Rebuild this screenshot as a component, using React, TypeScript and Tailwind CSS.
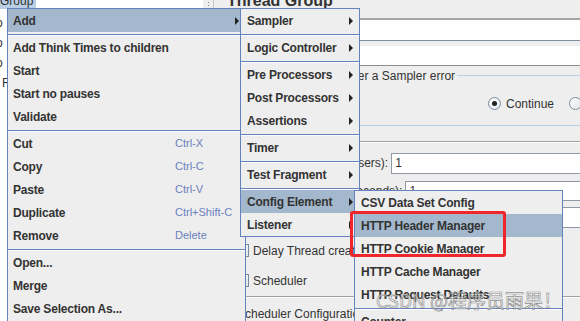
import React from 'react';

type Entry = { label: string; sub?: boolean; key?: string; active?: boolean } | 'sep';

const mainItems: Entry[] = [
  { label: 'Add', sub: true, active: true },
  'sep',
  { label: 'Add Think Times to children' },
  { label: 'Start' },
  { label: 'Start no pauses' },
  { label: 'Validate' },
  'sep',
  { label: 'Cut', key: 'Ctrl-X' },
  { label: 'Copy', key: 'Ctrl-C' },
  { label: 'Paste', key: 'Ctrl-V' },
  { label: 'Duplicate', key: 'Ctrl+Shift-C' },
  { label: 'Remove', key: 'Delete' },
  'sep',
  { label: 'Open...' },
  { label: 'Merge' },
  { label: 'Save Selection As...' },
  { label: 'Save Node As Image' },
];

const addItems: Entry[] = [
  { label: 'Sampler', sub: true },
  'sep',
  { label: 'Logic Controller', sub: true },
  'sep',
  { label: 'Pre Processors', sub: true },
  { label: 'Post Processors', sub: true },
  { label: 'Assertions', sub: true },
  'sep',
  { label: 'Timer', sub: true },
  'sep',
  { label: 'Test Fragment', sub: true },
  'sep',
  { label: 'Config Element', sub: true, active: true },
  { label: 'Listener', sub: true },
];

const configItems: Entry[] = [
  { label: 'CSV Data Set Config' },
  { label: 'HTTP Header Manager', active: true },
  { label: 'HTTP Cookie Manager' },
  { label: 'HTTP Cache Manager' },
  { label: 'HTTP Request Defaults' },
  'sep',
  { label: 'Counter' },
];

function Arrow() {
  return (
    <svg width="4" height="8" viewBox="0 0 4 8" className="shrink-0">
      <path d="M0 0L4 4L0 8Z" fill="#222" />
    </svg>
  );
}

function Sep() {
  return (
    <div className="h-[4px] pt-[2px]">
      <div className="h-px bg-[#6382bf]" />
      <div className="h-px bg-white" />
    </div>
  );
}

function Menu({ items, className, pl, withKeys }: { items: Entry[]; className: string; pl: string; withKeys?: boolean }) {
  return (
    <div className={`absolute flex flex-col border border-[#6382bf] bg-[#eeeeee] ${className}`}>
      {items.map((it, i) =>
        it === 'sep' ? (
          <Sep key={i} />
        ) : (
          <div
            key={i}
            className={`flex h-[23px] shrink-0 items-center pr-[6px] ${pl} ${it.active ? 'bg-[#a3b8cc]' : ''}`}
          >
            <span className={`${withKeys ? 'w-[162px]' : 'flex-1'} whitespace-nowrap text-[12px] font-bold tracking-[-0.2px] text-[#333]`}>
              {it.label}
            </span>
            {withKeys && (
              <span className="flex-1 whitespace-nowrap text-[11px] text-[#6a80bd]">{it.key}</span>
            )}
            {it.sub && <Arrow />}
          </div>
        )
      )}
    </div>
  );
}

function Radio({ on }: { on?: boolean }) {
  return (
    <span className="flex h-[13px] w-[13px] shrink-0 items-center justify-center rounded-full border border-[#7a8a99] bg-gradient-to-br from-white to-[#dfe6ee]">
      {on && <span className="h-[5px] w-[5px] rounded-full bg-[#222]" />}
    </span>
  );
}

function Check() {
  return <span className="h-[13px] w-[13px] shrink-0 border border-[#7a8a99] bg-gradient-to-br from-white to-[#dfe6ee]" />;
}

export default function App() {
  return (
    <div className="relative flex h-[321px] w-[580px] overflow-hidden bg-[#eeeeee] font-['Liberation_Sans',Arial,sans-serif] text-[12px] text-[#333]">
      {/* tree */}
      <div className="flex w-[203px] shrink-0 flex-col bg-white">
        <div className="mt-[-11px] flex h-[20px] items-end">
          <span className="bg-[#b8cfe5] pr-[3px] leading-[16px]">Group</span>
        </div>
        <div className="ml-[-4px] flex flex-col leading-[20px]">
          <span className="mt-[4px]">o</span>
          <span>o</span>
          <span>o</span>
          <span className="ml-[6px]">R</span>
        </div>
      </div>
      {/* divider */}
      <div className="flex w-[11px] shrink-0 justify-center border-r border-[#c8c8c8] bg-[#eeeeee] pt-[2px]">
        <div className="flex flex-col gap-[2px]">
          <span className="h-px w-px bg-[#888]" />
          <span className="h-px w-px bg-[#888]" />
          <span className="h-px w-px bg-[#888]" />
        </div>
      </div>
      {/* thread group panel */}
      <div className="flex min-w-0 flex-1 flex-col">
        <div className="ml-[13px] mt-[-7px] h-[16px] shrink-0 whitespace-nowrap text-[16px] font-bold leading-[16px]">Thread Group</div>
        <div className="mt-[9px] flex h-[23px] items-center pl-[14px]">
          <span className="w-[40px]">Name:</span>
          <div className="mr-[-20px] h-full flex-1 border-b border-t-2 border-b-[#8190a0] border-t-[#a6a6a6] bg-white" />
        </div>
        <div className="mt-[5px] flex h-[20px] items-center pl-[14px]">
          <span className="w-[70px]">Comments:</span>
          <div className="mr-[-20px] h-full flex-1 border-b border-b-[#8e8e8e] bg-white" />
        </div>
        <fieldset className="ml-[8px] mr-[-20px] mt-[3px] border border-[#b8cfe5]">
          <legend className="ml-[20px] whitespace-nowrap px-[2px] leading-[14px]">Action to be taken after a Sampler error</legend>
          <div className="mb-[13px] mt-[13px] flex h-[16px] items-center pl-[265px] whitespace-nowrap">
            <Radio on />
            <span className="ml-[5px]">Continue</span>
            <span className="ml-[15px]"><Radio /></span>
            <span className="ml-[5px]">Start Next Thread Loop</span>
          </div>
        </fieldset>
        <div className="ml-[8px] mr-[-20px] mt-[15px] h-[2px] border-b border-t border-b-white border-t-[#a0a0a0]" />
        <div className="mt-[10px] flex h-[21px] items-center pl-[27px]">
          <span className="whitespace-nowrap">Number of Threads (users):</span>
          <div className="ml-[3px] mr-[-20px] flex h-full flex-1 items-center border border-[#8e99a4] bg-white pl-[3px]">1</div>
        </div>
        <div className="mt-[7px] flex h-[21px] items-center pl-[27px]">
          <span className="whitespace-nowrap">Ramp-Up Period (in seconds):</span>
          <div className="ml-[3px] mr-[-20px] flex h-full flex-1 items-center border border-[#8e99a4] bg-white pl-[3px]">1</div>
        </div>
        <div className="mt-[6px] flex h-[21px] items-center pl-[27px]">
          <span className="whitespace-nowrap">Loop Count:</span>
          <span className="ml-[6px]"><Check /></span>
          <span className="ml-[4px]">Infinite</span>
          <div className="ml-[3px] mr-[-20px] flex h-full flex-1 items-center border border-[#8e99a4] bg-white pl-[3px]">1</div>
        </div>
        <div className="mt-[12px] flex h-[21px] items-center gap-[4px] pl-[22px] whitespace-nowrap">
          <Check />
          <span>Delay Thread creation until needed</span>
        </div>
        <div className="mt-[9px] flex h-[21px] items-center gap-[4px] pl-[22px] whitespace-nowrap">
          <Check />
          <span>Scheduler</span>
        </div>
        <div className="ml-[8px] mr-[-20px] mt-[5px] h-[2px] shrink-0 border-b border-t border-b-white border-t-[#a0a0a0]" />
        <div className="mt-[9px] h-[14px] shrink-0 whitespace-nowrap pl-[23px] leading-[14px]">Scheduler Configuration</div>
      </div>

      {/* popup menus */}
      <Menu items={mainItems} className="left-[7px] top-[8px] w-[239px]" pl="pl-[5px]" withKeys />
      <Menu items={addItems} className="left-[240px] top-[8px] w-[120px]" pl="pl-[6px]" />
      <Menu items={configItems} className="left-[354px] top-[190px] w-[209px]" pl="pl-[6px]" />

      {/* annotation + watermark */}
      <div className="absolute left-[350px] top-[211px] h-[46px] w-[156px] rounded-[3px] border-[3px] border-[#f0262a]" />
      <div className="absolute left-[376px] top-[288px] whitespace-nowrap font-['Noto_Sans_CJK_SC',sans-serif] text-[19px] leading-[24px] text-[rgba(255,255,255,0.55)] [-webkit-text-stroke:0.7px_rgba(110,110,110,0.75)]">
        CSDN @程序员雨果！
      </div>
    </div>
  );
}
